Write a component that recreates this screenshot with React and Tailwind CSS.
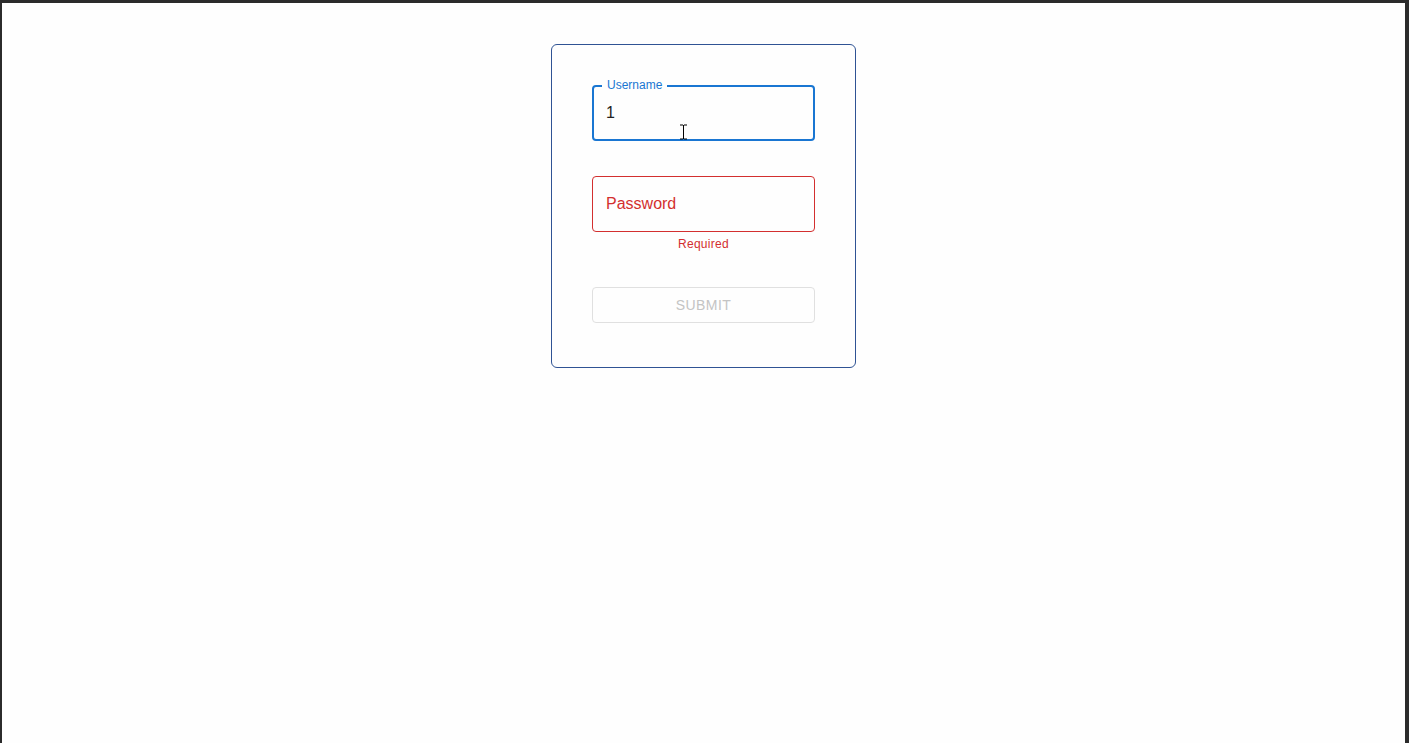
import React, { useState } from "react";

const font = { fontFamily: "'Liberation Sans', Arial, sans-serif" };

function CursorBeam() {
  return (
    <svg
      className="absolute left-[85px] top-[37px]"
      width="9"
      height="16"
      viewBox="0 0 9 16"
    >
      <path d="M1 1h3M5 1h3M4.5 1v14M1 15h3M5 15h3" stroke="#000" strokeWidth="1" fill="none" />
    </svg>
  );
}

function App() {
  const [username, setUsername] = useState("1");
  const [password, setPassword] = useState("");

  return (
    <div
      className="h-[743px] border-t-[3px] border-l-2 border-r-4 border-[#2b2b2b] bg-[#fefefe]"
      style={font}
    >
      <div className="flex justify-center pt-[41px]">
        <form
          className="w-[305px] rounded-md border border-[#2f5394] px-10 pt-10 pb-[44px]"
          onSubmit={(e) => e.preventDefault()}
        >
          {/* username, focused */}
          <div className="relative h-[56px] rounded border-2 border-[#1976d2]">
            <span className="absolute -top-[10px] left-[8px] bg-[#fefefe] px-[5px] text-[12px] leading-[16px] text-[#1976d2]">
              Username
            </span>
            <input
              value={username}
              onChange={(e) => setUsername(e.target.value)}
              className="h-full w-full bg-transparent px-[12px] pb-[1px] text-[16px] text-[#222] outline-none caret-black"
            />
            <CursorBeam />
          </div>

          {/* password, error */}
          <div className="mt-[35px]">
            <div className="relative h-[56px] rounded border border-[#d32f2f]">
              <input
                type="password"
                value={password}
                placeholder="Password"
                onChange={(e) => setPassword(e.target.value)}
                className="h-full w-full bg-transparent px-[13px] pb-[1px] text-[16px] text-[#222] placeholder:text-[#d32f2f] outline-none"
              />
            </div>
            <p className="mt-[2px] text-center text-[12px] leading-[20px] tracking-[0.3px] text-[#d32f2f]">
              Required
            </p>
          </div>

          <button
            type="submit"
            disabled
            className="mt-[33px] h-[36px] w-full rounded border border-[#e0e0e0] text-[14px] tracking-[0.4px] text-[#c4c4c4]"
          >
            SUBMIT
          </button>
        </form>
      </div>
    </div>
  );
}

export default App;
